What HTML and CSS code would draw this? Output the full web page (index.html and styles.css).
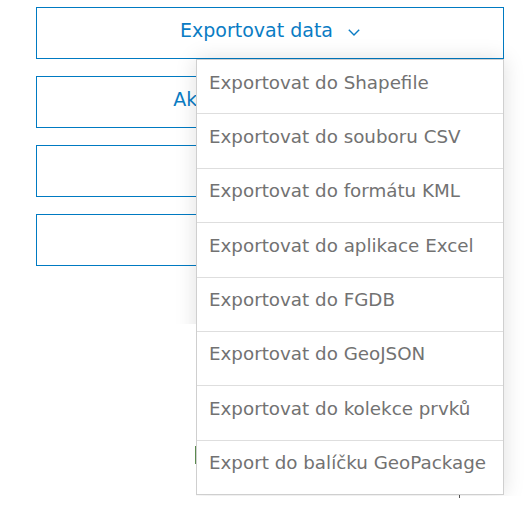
FILE: index.html
```html
<!DOCTYPE html>
<html lang="cs">
<head>
<meta charset="utf-8">
<title>Exportovat data</title>
<link rel="stylesheet" href="styles.css">
</head>
<body>
<div class="panel">
  <div class="actions">
    <div class="dropdown">
      <button class="btn btn-open" type="button">
        <span>Exportovat data</span>
        <svg class="chevron" width="12" height="7" viewBox="0 0 12 7" aria-hidden="true"><path d="M0.8 0.8 L6 6 L11.2 0.8" fill="none" stroke="currentColor" stroke-width="1.4"/></svg>
      </button>
      <ul class="menu">
        <li class="item">Exportovat do Shapefile</li>
        <li class="item">Exportovat do souboru CSV</li>
        <li class="item">Exportovat do formátu KML</li>
        <li class="item">Exportovat do aplikace Excel</li>
        <li class="item">Exportovat do FGDB</li>
        <li class="item">Exportovat do GeoJSON</li>
        <li class="item">Exportovat do kolekce prvků</li>
        <li class="item">Export do balíčku GeoPackage</li>
      </ul>
    </div>
    <button class="btn" type="button">
      <span>Aktualizovat data</span>
      <svg class="chevron" width="12" height="7" viewBox="0 0 12 7" aria-hidden="true"><path d="M0.8 0.8 L6 6 L11.2 0.8" fill="none" stroke="currentColor" stroke-width="1.4"/></svg>
    </button>
    <button class="btn" type="button"></button>
    <button class="btn" type="button"></button>
  </div>
  <span class="mark-green"></span>
  <span class="mark-dark"></span>
</div>
</body>
</html>
```

FILE: styles.css
```css
* { box-sizing: border-box; }
html, body { margin: 0; padding: 0; background: #ffffff; }
body {
  width: 528px;
  height: 508px;
  overflow: hidden;
  font-family: "DejaVu Sans", "Open Sans", sans-serif;
}
.panel {
  position: relative;
  width: 528px;
  height: 508px;
}
.actions {
  display: flex;
  flex-direction: column;
  gap: 17px;
  padding: 7px 24px 0 36px;
}
.dropdown { position: relative; }
.btn {
  display: flex;
  align-items: center;
  justify-content: center;
  gap: 15px;
  width: 100%;
  height: 52px;
  margin: 0;
  padding: 0 0 5px 0;
  border: 1px solid #007ac2;
  background: #ffffff;
  color: #0a7cc4;
  font-family: "DejaVu Sans", "Open Sans", sans-serif;
  font-size: 19px;
  font-weight: 400;
  line-height: 1.2;
}
.chevron { display: block; margin-top: 4px; }
.menu {
  position: absolute;
  top: 100%;
  right: 0;
  z-index: 5;
  width: 308px;
  margin: 0;
  padding: 0;
  list-style: none;
  background: #ffffff;
  border: 1px solid #cfcfcf;
}
.menu::before {
  content: "";
  position: absolute;
  inset: -1px;
  z-index: -1;
  box-shadow: 0 0 20px rgba(0, 0, 0, 0.13);
  clip-path: polygon(-40px -40px, calc(100% + 40px) -40px, calc(100% + 40px) calc(100% + 1px), 0 calc(100% + 1px), 0 265px, -40px 265px);
  pointer-events: none;
}
.item {
  height: 53.375px;
  box-sizing: content-box;
  padding: 0 12px;
  font-size: 18.3px;
  font-weight: 400;
  line-height: 1.2;
  color: #727272;
  white-space: nowrap;
}
.item::before {
  content: "";
  display: block;
  height: 11.5px;
}
.item + .item { border-top: 1px solid #dedede; }
.mark-green {
  position: absolute;
  left: 195px;
  top: 446px;
  width: 1px;
  height: 18px;
  background: #5b8a4f;
}
.mark-dark {
  position: absolute;
  left: 459px;
  top: 494px;
  width: 1px;
  height: 4px;
  background: #555555;
}
```
